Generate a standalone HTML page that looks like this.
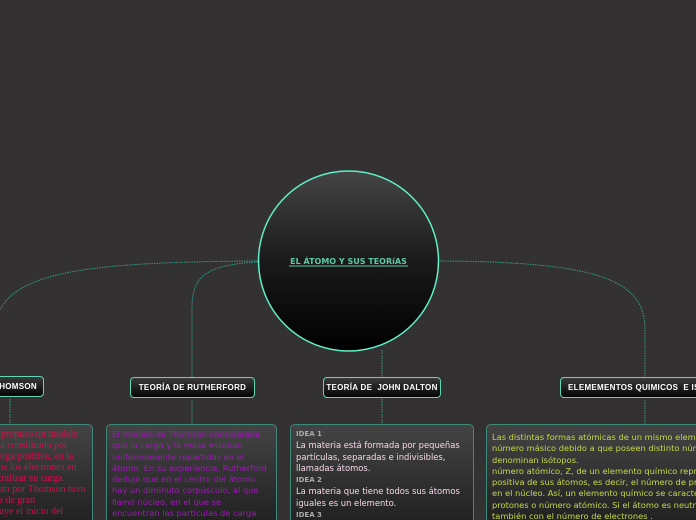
<!DOCTYPE html>
<html style="overflow:hidden;height:520px"><head><meta charset="utf-8"><style>
body{margin:0;width:696px;height:520px;background:#333132;overflow:hidden;position:relative;font-family:"DejaVu Sans","Liberation Sans",sans-serif;}
.node{position:absolute;height:21px;border:1.5px solid #5fd8b8;border-radius:4px;background:linear-gradient(#3a3a3a,#050505);color:#fff;font-family:"Liberation Sans",sans-serif;font-size:8px;font-weight:bold;line-height:19px;text-align:center;box-sizing:border-box;white-space:nowrap;overflow:hidden;letter-spacing:0.3px}
.box{position:absolute;top:424px;height:96px;border:1px solid #3e8a78;border-bottom:none;border-radius:5px 5px 0 0;background:linear-gradient(#444,#222);box-sizing:border-box;padding:4px 5px;font-size:8px;line-height:11.3px;overflow:hidden}
.idea{color:#aaa;font-weight:bold;font-size:7px}
</style></head><body>
<svg width="696" height="520" style="position:absolute;left:0;top:0">
<g fill="none" stroke="#3a9a86" stroke-width="1" stroke-dasharray="1.5,1">
<path d="M258 261 C100 262 20 270 0 310"/>
<path d="M258 262 C200 265 192 280 192 310 L192 377"/>
<path d="M382 350 L382 377"/>
<path d="M440 261 C600 262 645 280 645 330 L645 377"/>
<path d="M192 400 L192 424"/><path d="M382 399 L382 424"/><path d="M645 400 L645 424"/><path d="M10 399 L10 424"/>
</g>
<defs><linearGradient id="g" x1="0" y1="0" x2="0" y2="1"><stop offset="0" stop-color="#454545"/><stop offset="0.5" stop-color="#1a1a1a"/><stop offset="1" stop-color="#000"/></linearGradient></defs>
<circle cx="348.5" cy="261" r="90" fill="url(#g)" stroke="#5ff0c8" stroke-width="1.5"/>
<text x="348.5" y="264" text-anchor="middle" font-family="DejaVu Sans,sans-serif" font-weight="bold" font-size="8" fill="#5fc8a8">EL ÁTOMO Y SUS TEORíAS</text>
<line x1="289" y1="266" x2="408" y2="266" stroke="#5fc8a8" stroke-width="1"/>
</svg>
<div class="node" style="left:-20px;top:376px;width:64px;text-align:right;padding-right:6px">HOMSON</div>
<div class="node" style="left:130px;top:377px;width:125px">TEORÍA DE RUTHERFORD</div>
<div class="node" style="left:323px;top:377px;width:118px">TEORÍA DE &nbsp;JOHN DALTON</div>
<div class="node" style="left:560px;top:377px;width:150px;text-align:left;padding-left:7px">ELEMEMENTOS QUIMICOS &nbsp;E ISOTOPOS</div>
<div class="box" style="left:-10px;width:103px;color:#d0104a;font-family:'Liberation Serif',serif;font-size:10px;line-height:11px;padding-left:0;white-space:nowrap">
&nbsp;n propuso un modelo<br>&nbsp;stá constituido por<br>&nbsp;carga positiva, en la<br>&nbsp;dos los electrones en<br>&nbsp;utralizar su carga.<br>&nbsp;esto por Thomson tuvo<br>&nbsp;ue de gran<br>&nbsp;ituye el inicio del</div>
<div class="box" style="left:106px;width:171px;color:#a018b8;font-size:8.3px">El modelo de Thomson consideraba que la carga y la masa estaban uniformemente repartidas en el átomo. En su experiencia, Rutherford dedujo que en el centro del átomo hay un diminuto corpúsculo, al que llamó núcleo, en el que se encuentran las partículas de carga positiva, los protones.</div>
<div class="box" style="left:290px;width:184px;color:#f4d8e8;padding-top:3px;font-size:8.4px"><span class="idea">IDEA 1</span><br>La materia está formada por pequeñas partículas, separadas e indivisibles, llamadas átomos.<br><span class="idea">IDEA 2</span><br>La materia que tiene todos sus átomos iguales es un elemento.<br><span class="idea">IDEA 3</span><br>Los átomos de los diferentes elementos se</div>
<div class="box" style="left:486px;width:230px;color:#c8d84a;padding-top:7px;white-space:nowrap;font-size:8.3px">Las distintas formas atómicas de un mismo elemento<br>número másico debido a que poseen distinto número<br>denominan isótopos.<br>número atómico, Z, de un elemento químico represe<br>positiva de sus átomos, es decir, el número de proto<br>en el núcleo. Así, un elemento químico se caracteriz<br>protones o número atómico. Si el átomo es neutro, c<br>también con el número de electrones .</div>
</body></html>
